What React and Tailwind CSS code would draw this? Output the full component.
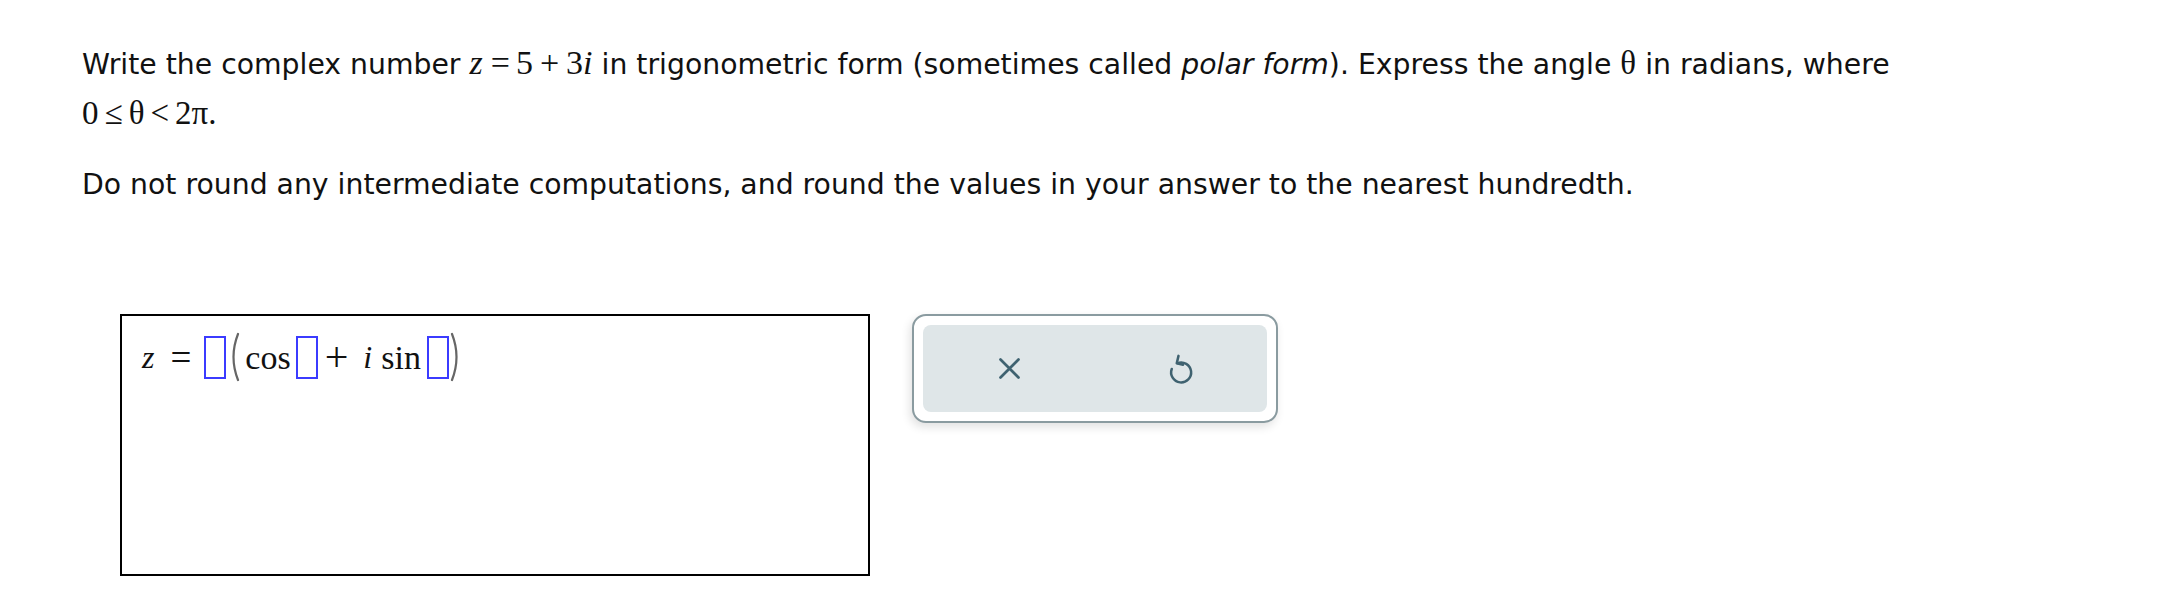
import React from "react";

const Paren = ({ flip }) => (
  <svg width="12" height="50" viewBox="0 0 12 50" className="shrink-0">
    <path
      d={flip ? "M3 2 Q12 25 3 48" : "M9 2 Q0 25 9 48"}
      fill="none"
      stroke="#666"
      strokeWidth="2.2"
      strokeLinecap="round"
    />
  </svg>
);

const Slot = () => (
  <span className="inline-block w-[22px] h-[43px] border-2 border-[#3b3bff] shrink-0" />
);

export default function App() {
  const sans = { fontFamily: '"DejaVu Sans", Verdana, sans-serif' };
  return (
    <div className="w-[2160px] h-[601px] bg-white text-[#111] pl-[82px] pt-[39px]" style={sans}>
      <p className="text-[28.3px] leading-[48px] m-0 w-[1940px]">
        Write the complex number{" "}
        <span className="font-['Liberation_Serif',serif] text-[34px]">
          <span className="italic">z</span>
          <span className="ml-[8px] mr-[6px]">=</span>5<span className="mx-[7px]">+</span>3
          <span className="italic">i</span>
        </span>{" "}
        in trigonometric form (sometimes called <span className="italic">polar form</span>). Express the angle{" "}
        <span className="font-['Liberation_Serif',serif] text-[33px]">θ</span> in radians, where
        <br />
        <span className="font-['Liberation_Serif',serif] text-[33px]">
          0<span className="mx-[6px]">≤</span>θ<span className="mx-[6px]">&lt;</span>2π.
        </span>
      </p>
      <p className="text-[28.3px] leading-[48px] m-0 mt-[22px]">
        Do not round any intermediate computations, and round the values in your answer to the nearest hundredth.
      </p>

      <div className="flex items-start mt-[105px] ml-[38px]">
        <div className="w-[750px] h-[262px] border-2 border-black pl-[20px] pt-[16px]">
          <div className="flex items-center h-[50px] font-['Liberation_Serif',serif] text-[32px] text-[#111]">
            <span className="italic">z</span>
            <span className="ml-[16px] text-[37px] leading-none">=</span>
            <span className="ml-[13px] flex items-center">
              <Slot />
            </span>
            <span className="ml-[3px]">
              <Paren />
            </span>
            <span className="ml-[4px] text-[34px]">cos</span>
            <span className="ml-[5px] flex items-center">
              <Slot />
            </span>
            <span className="ml-[7px] text-[42px] leading-none">+</span>
            <span className="ml-[15px] italic">i</span>
            <span className="ml-[9px] text-[34px]">sin</span>
            <span className="ml-[6px] flex items-center">
              <Slot />
            </span>
            <span>
              <Paren flip />
            </span>
          </div>
        </div>

        <div className="ml-[42px] w-[366px] h-[109px] border-2 border-[#8a9ba0] rounded-[14px] bg-white p-[9px] shadow-[-2px_4px_10px_rgba(0,0,0,0.12)]">
          <div className="w-full h-full bg-[#dfe6e8] rounded-[8px] flex">
            <button className="flex-1 flex items-center justify-center">
              <svg width="27" height="27" viewBox="0 0 24 24" fill="none" stroke="#3f6270" strokeWidth="2.4" strokeLinecap="round">
                <path d="M4 4 L20 20 M20 4 L4 20" />
              </svg>
            </button>
            <button className="flex-1 flex items-center justify-center">
              <svg width="30" height="36" viewBox="0 0 24 28" fill="none" stroke="#3f6270" strokeWidth="2" strokeLinecap="round" strokeLinejoin="round">
                <path d="M9.2 9.3 A8 8 0 1 1 4.6 14" />
                <path d="M10 3.5 L8.6 9.4 L13.6 10.6" />
              </svg>
            </button>
          </div>
        </div>
      </div>
    </div>
  );
}
